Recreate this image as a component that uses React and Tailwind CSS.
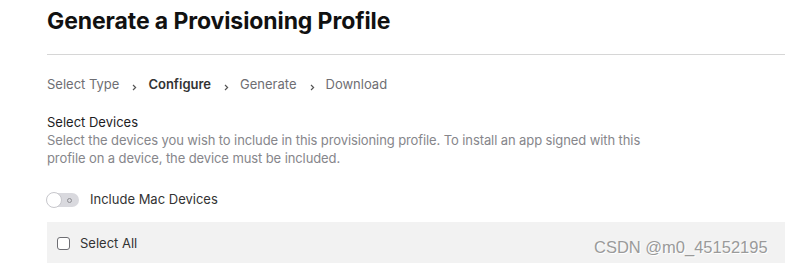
export default function App() {
  const steps = ['Select Type', 'Configure', 'Generate', 'Download'];

  return (
    <div className="relative w-[785px] h-[265px] overflow-hidden bg-white font-['Inter',sans-serif]">
      <div className="pl-[47px]">
        <h1 className="pt-[7px] text-[23px] leading-[28px] font-bold text-[#111] tracking-[-0.1px]">
          Generate a Provisioning Profile
        </h1>
        <div className="mt-[19px] h-px bg-[#d6d6d6]" />

        <div className="mt-[20px] flex items-center text-[13px] leading-[18px] text-[#6e6e73]">
          {steps.map((s, i) => (
            <div key={s} className="flex items-center">
              {i > 0 && (
                <svg className="ml-[13px] mr-[11px] mt-[6px]" width="5" height="7" viewBox="0 0 5 7">
                  <path d="M1 1 L3.6 3.5 L1 6" fill="none" stroke="#555" strokeWidth="1.2" />
                </svg>
              )}
              <span className={i === 1 ? 'font-semibold text-[#333]' : ''}>{s}</span>
            </div>
          ))}
        </div>

        <div className="mt-[20px] text-[13px] leading-[18px]">
          <p className="text-[#1d1d1f]">Select Devices</p>
          <p className="w-[610px] text-[#86868b] tracking-[-0.1px]">
            Select the devices you wish to include in this provisioning profile. To install an app signed with this
            profile on a device, the device must be included.
          </p>
        </div>

        <div className="mt-[23px] flex items-center">
          <div className="relative w-[32px] h-[14px] rounded-full bg-[#d9d9de]">
            <div className="absolute -left-px -top-px w-[16px] h-[16px] rounded-full bg-white border border-[#c7c7cc]" />
            <div className="absolute right-[7px] top-[5px] w-[5px] h-[5px] rounded-full border border-[#8e8e93]" />
          </div>
          <span className="ml-[11px] text-[13px] text-[#333]">Include Mac Devices</span>
        </div>

        <div className="mt-[12px] h-[41px] bg-[#f2f2f2] flex items-center pl-[10px] pt-[3px]">
          <div className="w-[13px] h-[13px] rounded-[3px] border border-[#6e6e73] bg-white" />
          <span className="ml-[10px] text-[13px] text-[#333]">Select All</span>
        </div>
      </div>

      <div className="absolute left-[594px] top-[237px] text-[16.5px] leading-[20px] text-[#9a9a9a] font-['Liberation_Sans',sans-serif] [text-shadow:1px_1px_0_#fff]">
        CSDN @m0_45152195
      </div>
    </div>
  );
}
